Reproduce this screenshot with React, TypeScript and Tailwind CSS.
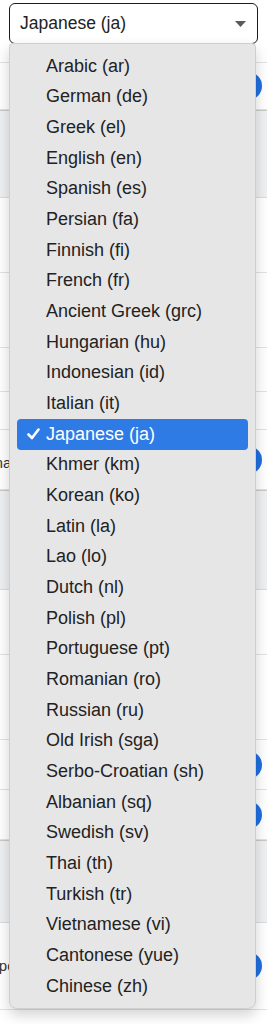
const languages = [
  "Arabic (ar)",
  "German (de)",
  "Greek (el)",
  "English (en)",
  "Spanish (es)",
  "Persian (fa)",
  "Finnish (fi)",
  "French (fr)",
  "Ancient Greek (grc)",
  "Hungarian (hu)",
  "Indonesian (id)",
  "Italian (it)",
  "Japanese (ja)",
  "Khmer (km)",
  "Korean (ko)",
  "Latin (la)",
  "Lao (lo)",
  "Dutch (nl)",
  "Polish (pl)",
  "Portuguese (pt)",
  "Romanian (ro)",
  "Russian (ru)",
  "Old Irish (sga)",
  "Serbo-Croatian (sh)",
  "Albanian (sq)",
  "Swedish (sv)",
  "Thai (th)",
  "Turkish (tr)",
  "Vietnamese (vi)",
  "Cantonese (yue)",
  "Chinese (zh)",
];

const selected = "Japanese (ja)";

// background settings rows, mostly hidden under the open menu
function Row({ h, toggle, label, shift }: { h: string; toggle?: boolean; label?: string; shift?: string }) {
  return (
    <div className={`relative flex items-center border-b border-[#e2e2e2] bg-white ${h}`}>
      {label && <span className={`text-[15px] text-[#333] ${shift}`}>{label}</span>}
      {toggle && <div className="absolute right-[5px] h-[28px] w-[46px] rounded-full bg-[#1f6fe0]" />}
    </div>
  );
}

function Band({ h }: { h: string }) {
  return <div className={`border-b border-[#dcdcdc] border-t border-t-[#c9c9c9] bg-[#eef0f2] ${h}`} />;
}

export default function App() {
  return (
    <div className="relative h-[1024px] w-[267px] overflow-hidden bg-white" style={{ fontFamily: "'Liberation Sans', Arial, sans-serif" }}>
      {/* page behind */}
      <div className="flex flex-col">
        <Row h="h-[63px]" />
        <Row h="h-[47px]" toggle />
        <Band h="h-[88px]" />
        <Row h="h-[75px]" />
        <Row h="h-[75px]" />
        <Row h="h-[44px]" />
        <Row h="h-[38px]" />
        <Row h="h-[60px]" toggle label="Format" shift="ml-[-32px] mt-[8px]" />
        <Band h="h-[100px]" />
        <Row h="h-[65px]" />
        <Row h="h-[85px]" />
        <Row h="h-[50px]" toggle />
        <Row h="h-[50px]" toggle />
        <Band h="h-[83px]" />
        <Row h="h-[87px]" toggle label="Type" shift="ml-[-17px]" />
        <Row h="h-[30px]" />
      </div>

      {/* select */}
      <div className="absolute left-[9px] top-[3px] flex h-[41px] w-[249px] items-center justify-between rounded-[6px] border-[1.5px] border-[#1c1c1c] bg-white pl-[10px] pr-[11px]">
        <span className="text-[17.5px] text-[#222]">{selected}</span>
        <svg width="11" height="6" viewBox="0 0 11 6">
          <path d="M0 0 H11 L5.5 6 Z" fill="#5a5a5a" />
        </svg>
      </div>

      {/* open menu */}
      <div className="absolute left-[9px] top-[43px] flex w-[247px] flex-col rounded-b-[8px] rounded-t-[4px] border border-[#cfcfcf] bg-[#e6e6e6] px-[7px] py-[7px] shadow-[0_6px_14px_rgba(0,0,0,0.18)]">
        {languages.map((lang) => {
          const on = lang === selected;
          return (
            <div
              key={lang}
              className={`flex h-[30.67px] items-center rounded-[4px] ${on ? "bg-[#2f7be6] text-white" : "text-[#222]"}`}
            >
              <span className="flex w-[29px] justify-center pl-[3px]">
                {on && (
                  <svg width="13" height="12" viewBox="0 0 13 12">
                    <path d="M1.5 6.5 L5 10 L11.5 1.5" stroke="white" strokeWidth="2.6" fill="none" strokeLinecap="round" strokeLinejoin="round" />
                  </svg>
                )}
              </span>
              <span className={`text-[18px] ${on ? "font-medium" : ""}`}>{lang}</span>
            </div>
          );
        })}
      </div>
    </div>
  );
}
